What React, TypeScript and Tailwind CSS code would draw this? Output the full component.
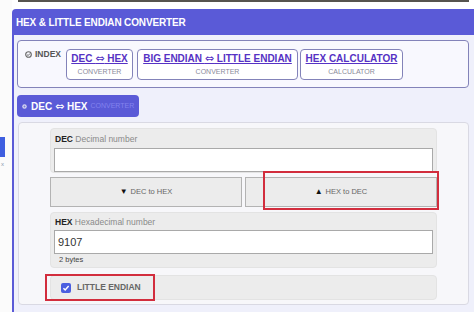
const Arrow = () => (
  <span className="font-['DejaVu_Sans',sans-serif] font-normal text-[11px] leading-[10px]">⇔</span>
);

const LinkBox = ({ title, sub, w }: { title: React.ReactNode; sub: string; w: string }) => (
  <div
    className={`${w} h-[31px] flex flex-col items-center justify-center border border-[#8383b9] rounded-[4px] bg-white`}
  >
    <span className="text-[10px] leading-[12px] font-bold text-[#5632c4] underline whitespace-nowrap">
      {title}
    </span>
    <span className="text-[7px] leading-[9px] mt-[2px] text-[#8a8a9a] whitespace-nowrap">{sub}</span>
  </div>
);

const App = () => {
  return (
    <div className="w-[474px] h-[312px] overflow-hidden bg-white flex font-['Liberation_Sans',Arial,sans-serif]">
      {/* left sidebar edge */}
      <div className="w-[12px] flex flex-col bg-[#fbfbfb]">
        <div className="mt-[137px] w-[5px] h-[20px] bg-[#3f5fe0]" />
        <span className="text-[6px] leading-[8px] text-[#8a9ab0] pl-[1px] mt-[3px]">x</span>
      </div>

      <div className="flex-1 flex flex-col">
        <div className="h-[2px] bg-[#56544f] ml-[6px] mr-[5px]" />
        <div className="h-[7px]" />

        {/* header */}
        <div className="h-[26px] bg-[#5a5ad7] rounded-tl-[4px] flex items-center pl-[4px]">
          <span className="text-[10px] font-bold text-white tracking-[-0.15px]">
            HEX &amp; LITTLE ENDIAN CONVERTER
          </span>
        </div>

        {/* body */}
        <div className="flex-1 border-l-2 border-[#5a5ad7] bg-[#eff0fb] pl-[3px] pr-[5px] pt-[5px]">
          {/* index */}
          <div className="h-[48px] border border-[#8383b9] rounded-[4px] bg-[#f8f8fe] flex pl-[7px] pt-[8px]">
            <div className="flex items-start gap-[3px] mt-[1px] w-[41px]">
              <svg width="7" height="7" viewBox="0 0 10 10" className="mt-[1px]">
                <circle cx="5" cy="5" r="4" fill="none" stroke="#666" strokeWidth="1.6" />
                <path d="M3 5.2 L4.5 6.6 L7 3.6" fill="none" stroke="#666" strokeWidth="1.4" />
              </svg>
              <span className="text-[8.5px] leading-[9px] font-bold text-[#555]">INDEX</span>
            </div>
            <LinkBox title={<>DEC <Arrow /> HEX</>} sub="CONVERTER" w="w-[67px]" />
            <div className="w-[4px]" />
            <LinkBox
              title={<>BIG ENDIAN <Arrow /> LITTLE ENDIAN</>}
              sub="CONVERTER"
              w="w-[161px]"
            />
            <div className="w-[2px]" />
            <LinkBox title="HEX CALCULATOR" sub="CALCULATOR" w="w-[103px]" />
          </div>

          {/* tab */}
          <div className="mt-[7px] w-[122px] h-[22px] bg-[#5a5ad7] rounded-[4px] flex items-center pl-[5px]">
            <svg width="5" height="5" viewBox="0 0 10 10">
              <circle cx="5" cy="5" r="4.5" fill="#d8d8f0" />
              <circle cx="5" cy="5" r="2" fill="#7a7ad8" />
            </svg>
            <span className="ml-[4px] text-[10px] font-bold text-white whitespace-nowrap">
              DEC <Arrow /> HEX
            </span>
            <span className="ml-[3px] text-[7px] text-[#8282ee] whitespace-nowrap">CONVERTER</span>
          </div>

          {/* converter panel */}
          <div className="relative mt-[5px] ml-[1px] h-[183px] bg-[#f7f7fa] border border-[#d9d9e3] rounded-[4px] px-[31px] pt-[5px]">
            {/* DEC */}
            <div className="h-[45px] bg-[#ececec] border border-[#e3e3e3] rounded-[4px] px-[3px] pt-[3px]">
              <div className="text-[8.5px] leading-[14px] pl-[1px]">
                <span className="font-bold text-[#222]">DEC</span>{" "}
                <span className="text-[#8a8a8a]">Decimal number</span>
              </div>
              <div className="mt-[2px] h-[24px] bg-white border border-[#a9a9a9]" />
            </div>

            {/* buttons */}
            <div className="mt-[4px] h-[30px] flex gap-[3px]">
              <div className="flex-1 bg-[#ececec] border border-[#b3b3b3] flex items-center justify-center gap-[3px]">
                <span className="text-[8px] text-[#111]">▼</span>
                <span className="text-[7.5px] text-[#666]">DEC to HEX</span>
              </div>
              <div className="flex-1 bg-[#ececec] border border-[#b3b3b3] flex items-center justify-center gap-[3px]">
                <span className="text-[8px] text-[#111]">▲</span>
                <span className="text-[7.5px] text-[#666]">HEX to DEC</span>
              </div>
            </div>

            {/* HEX */}
            <div className="mt-[5px] h-[56px] bg-[#ececec] border border-[#e3e3e3] rounded-[4px] px-[3px] pt-[3px]">
              <div className="text-[8.5px] leading-[12px] pl-[1px]">
                <span className="font-bold text-[#222]">HEX</span>{" "}
                <span className="text-[#8a8a8a]">Hexadecimal number</span>
              </div>
              <div className="mt-[2px] h-[24px] bg-white border border-[#a9a9a9] flex items-center pl-[3px]">
                <span className="text-[11px] text-[#333]">9107</span>
              </div>
              <div className="text-[7.5px] leading-[12px] text-[#444] pl-[5px]">2 bytes</div>
            </div>

            {/* little endian */}
            <div className="mt-[7px] h-[25px] bg-[#ececec] border border-[#e3e3e3] rounded-[4px] flex items-center pl-[10px] gap-[6px]">
              <div className="w-[10px] h-[10px] rounded-[2px] bg-[#4b5fe0] flex items-center justify-center">
                <svg width="8" height="8" viewBox="0 0 10 10">
                  <path d="M1.8 5.2 L4 7.4 L8.3 2.6" fill="none" stroke="white" strokeWidth="1.8" />
                </svg>
              </div>
              <span className="text-[8.5px] font-bold text-[#666]">LITTLE ENDIAN</span>
            </div>

            {/* annotations */}
            <div className="absolute left-[244px] top-[48px] w-[176px] h-[39px] border-2 border-[#d22d3d]" />
            <div className="absolute left-[26px] top-[151px] w-[110px] h-[27px] border-2 border-[#d22d3d]" />
          </div>
        </div>
      </div>
    </div>
  );
};

export default App;
